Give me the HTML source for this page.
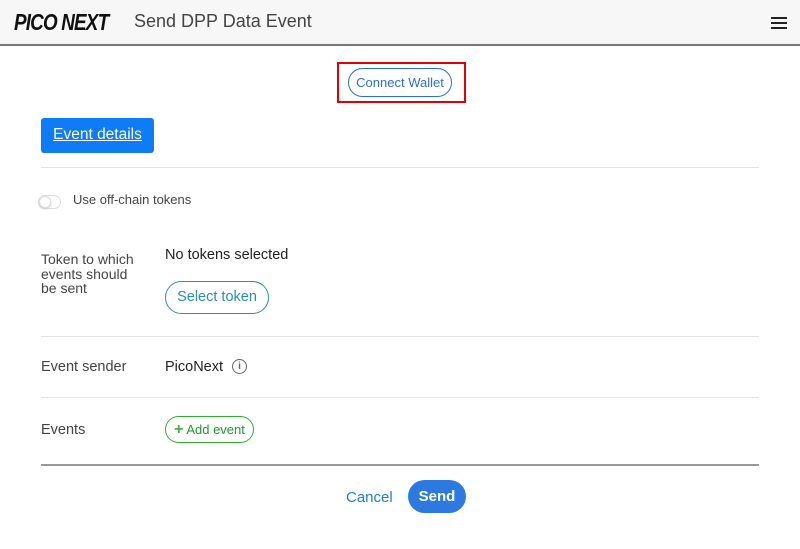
<!DOCTYPE html>
<html><head><style>
*{box-sizing:border-box;margin:0;padding:0}
body{width:800px;height:549px;background:#fff;font-family:"Liberation Sans",sans-serif;position:relative;overflow:hidden;color:#333}
.hdr{position:absolute;left:0;top:0;width:800px;height:46px;background:#f7f7f8;border-bottom:2px solid #777}
.logo{position:absolute;left:14px;top:9px;font-size:23px;font-weight:bold;font-style:italic;color:#111;letter-spacing:-1px;transform:scaleX(0.82);transform-origin:left;white-space:nowrap}
.title{position:absolute;left:134px;top:11px;font-size:18px;color:#444}
.burger{position:absolute;left:771px;top:17px;width:16px}
.burger div{height:2px;background:#222;margin-bottom:3px}
.abs{position:absolute;white-space:nowrap}
.hr{position:absolute;left:41px;width:718px;height:1px;background:#e4e4e4}
</style></head><body>
<div class="hdr"><div class="logo">PICO NEXT</div><div class="title">Send DPP Data Event</div>
<div class="burger"><div></div><div></div><div></div></div></div>
<div class="abs" style="left:337px;top:62px;width:129px;height:41px;border:2px solid #e30000"></div>
<div class="abs" style="left:348px;top:68px;width:104px;height:29px;border:1px solid #2c6fd6;border-radius:15px;color:#2c6fd6;font-size:13px;text-align:center;line-height:27px">Connect Wallet</div>
<div class="abs" style="left:41px;top:118px;width:113px;height:35px;background:#0d7cf5;border-radius:3px;color:#fff;font-size:15.5px;text-align:center;line-height:34px;text-decoration:underline">Event details</div>
<div class="hr" style="top:167px"></div>
<div class="abs" style="left:38px;top:195px;width:23px;height:14px;border:1px solid #ddd;border-radius:7px"><div style="width:12px;height:12px;border-radius:6px;background:#fff;border:1px solid #ddd;box-shadow:0 1px 2px #ccc"></div></div>
<div class="abs" style="left:73px;top:192px;font-size:13px;color:#444">Use off-chain tokens</div>
<div class="abs" style="left:41px;top:252px;font-size:14px;line-height:14.5px;color:#444;white-space:normal;width:100px">Token to which events should be sent</div>
<div class="abs" style="left:165px;top:247px;font-size:14.5px;color:#222">No tokens selected</div>
<div class="abs" style="left:165px;top:281px;width:104px;height:33px;border:1px solid #2a8fb0;border-radius:17px;color:#2a8fb0;font-size:14.5px;text-align:center;line-height:31px">Select token</div>
<div class="hr" style="top:336px"></div>
<div class="abs" style="left:41px;top:359px;font-size:14.5px;color:#444">Event sender</div>
<div class="abs" style="left:165px;top:359px;font-size:14.5px;color:#222">PicoNext</div>
<div class="abs" style="left:232px;top:359px;width:15px;height:15px;border:1.3px solid #666;border-radius:50%;font-size:10px;text-align:center;line-height:13px;color:#666;font-weight:bold">i</div>
<div class="hr" style="top:397px"></div>
<div class="abs" style="left:41px;top:422px;font-size:14.5px;color:#444">Events</div>
<div class="abs" style="left:165px;top:416px;width:89px;height:27px;border:1px solid #2db02d;border-radius:14px;color:#1f9a2f;font-size:13px;text-align:center;line-height:25px"><b style="color:#3bb53b;font-size:16px">+</b> Add event</div>
<div class="abs" style="left:41px;top:464px;width:718px;height:2px;background:#999"></div>
<div class="abs" style="left:346px;top:489px;font-size:15px;color:#1a7fe6">Cancel</div>
<div class="abs" style="left:408px;top:480px;width:58px;height:33px;background:#2c7ae0;border-radius:17px;color:#fff;font-size:15px;font-weight:bold;text-align:center;line-height:33px">Send</div>
</body></html>
